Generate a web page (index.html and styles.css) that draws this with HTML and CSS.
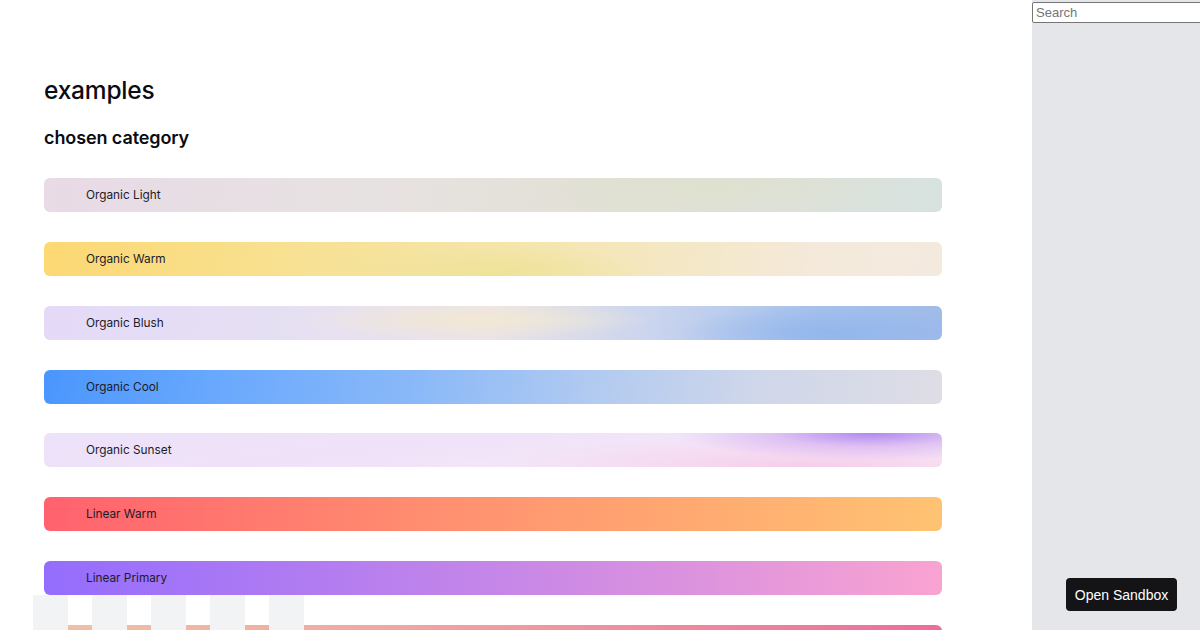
FILE: index.html
```html
<!DOCTYPE html>
<html lang="en">
<head>
<meta charset="utf-8">
<title>examples</title>
<link rel="stylesheet" href="styles.css">
</head>
<body>
<div class="layout">
  <main class="main">
    <h1 class="title">examples</h1>
    <h2 class="subtitle">chosen category</h2>
    <div class="list">
      <div class="bar g-light"><span>Organic Light</span></div>
      <div class="bar g-warm"><span>Organic Warm</span></div>
      <div class="bar g-blush"><span>Organic Blush</span></div>
      <div class="bar g-cool"><span>Organic Cool</span></div>
      <div class="bar g-sunset"><span>Organic Sunset</span></div>
      <div class="bar g-lwarm"><span>Linear Warm</span></div>
      <div class="bar g-lprimary"><span>Linear Primary</span></div>
      <div class="bar g-lsecondary"><span>Linear Secondary</span></div>
    </div>
  </main>
  <aside class="sidebar">
    <input class="search" type="text" placeholder="Search">
    <button class="sandbox">Open Sandbox</button>
  </aside>
</div>
<div class="tiles">
  <div class="tile"></div>
  <div class="tile"></div>
  <div class="tile"></div>
  <div class="tile"></div>
  <div class="tile"></div>
</div>
</body>
</html>
```
FILE: styles.css
```css
html, body {
  margin: 0;
  padding: 0;
  height: 100%;
  overflow: hidden;
  background: #ffffff;
}

.layout {
  display: flex;
  height: 630px;
}

.main {
  flex: 0 0 1032px;
  box-sizing: border-box;
  padding: 74px 0 0 44px;
  font-family: Inter, "Noto Sans", sans-serif;
  color: #0b0b12;
}

.title {
  margin: 0;
  font-size: 24.5px;
  font-weight: 500;
  line-height: 32px;
  letter-spacing: -0.2px;
}

.subtitle {
  margin: 19px 0 0;
  font-size: 18px;
  font-weight: 600;
  line-height: 26px;
  letter-spacing: -0.1px;
}

.list {
  margin-top: 27px;
  display: flex;
  flex-direction: column;
  gap: 29.85px;
  width: 898px;
}

.bar {
  height: 34px;
  border-radius: 6px;
  display: flex;
  align-items: center;
  padding-left: 42px;
  font-size: 11.8px;
  color: #1b1b2a;
  flex-shrink: 0;
}

.g-light {
  background:
    radial-gradient(ellipse 30% 120% at 75% 30%, rgba(222,224,205,0.8), rgba(222,224,205,0) 70%),
    linear-gradient(100deg, #e8dae6 0%, #e7e2e2 35%, #e2e0d5 65%, #d7e2df 100%);
}

.g-warm {
  background:
    radial-gradient(ellipse 25% 120% at 50% 90%, rgba(238,226,150,0.9), rgba(238,226,150,0) 70%),
    linear-gradient(100deg, #fdd873 0%, #f8e08f 25%, #f4e6b0 55%, #f4e9da 85%, #f3eadf 100%);
}

.g-blush {
  background:
    radial-gradient(ellipse 22% 110% at 88% 80%, rgba(146,182,236,1), rgba(146,182,236,0) 80%),
    radial-gradient(ellipse 25% 70% at 48% 40%, rgba(242,232,212,1), rgba(242,232,212,0) 80%),
    linear-gradient(100deg, #e4daf8 0%, #e6e0f2 30%, #ebe4e6 50%, #c9d4ee 68%, #a9c2ec 85%, #a0bbe9 100%);
}

.g-cool {
  background: linear-gradient(100deg, #4a96fe 0%, #6aa9fd 20%, #8bb9f8 42%, #b3cbf0 62%, #d0d7ea 80%, #dedde5 100%);
}

.g-sunset {
  background:
    radial-gradient(ellipse 22% 80% at 92% 0%, rgba(178,134,240,1), rgba(200,160,240,0.5) 50%, rgba(200,160,240,0) 100%),
    radial-gradient(ellipse 45% 120% at 85% 100%, rgba(245,205,235,1), rgba(245,205,235,0) 80%),
    linear-gradient(172deg, #ece2fa 0%, #f0e2f8 45%, #fbf2fa 100%);
}

.g-lwarm {
  background: linear-gradient(90deg, #ff626e 0%, #ff9070 45%, #ffc372 100%);
}

.g-lprimary {
  background: linear-gradient(90deg, #946dfe 0%, #c586e8 50%, #f9a3d1 100%);
}

.g-lsecondary {
  background: linear-gradient(90deg, #efc2a4 0%, #f0a6a2 40%, #ee6d9a 100%);
}

.sidebar {
  flex: 1 1 auto;
  background: #e5e6ea;
  position: relative;
  display: flex;
  flex-direction: column;
  align-items: flex-start;
  padding-top: 2px;
}

.search {
  box-sizing: border-box;
  width: 172px;
  height: 21px;
  margin: 0;
  padding: 0 3px;
  border: 1px solid #767676;
  border-radius: 2px 0 0 2px;
  background: #ffffff;
  font-family: "Liberation Sans", Arial, sans-serif;
  font-size: 13px;
  color: #222;
}

.search::placeholder {
  color: #757575;
}

.sandbox {
  margin-top: auto;
  margin-bottom: 19px;
  margin-left: 34px;
  width: 111px;
  height: 33px;
  border: 0;
  border-radius: 4px;
  background: #141417;
  color: #ffffff;
  font-family: "Liberation Sans", Arial, sans-serif;
  font-size: 14px;
}

.tiles {
  position: fixed;
  left: 33px;
  top: 595px;
  display: flex;
  gap: 24px;
}

.tile {
  width: 35px;
  height: 40px;
  background: #f2f3f5;
}
```
